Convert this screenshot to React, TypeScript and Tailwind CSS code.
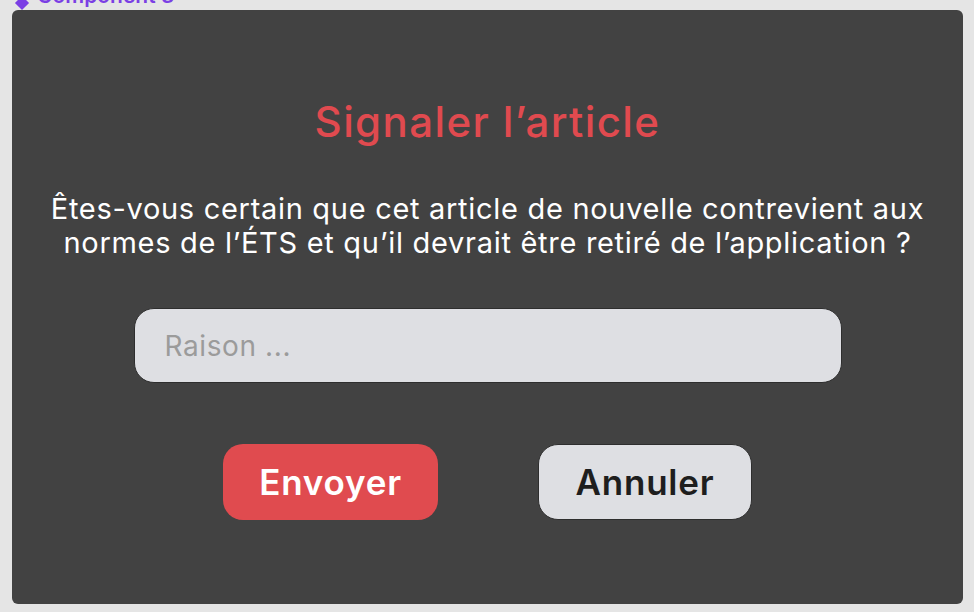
import React from "react";

export default function App() {
  return (
    <div className="w-[974px] h-[612px] bg-[#e5e5e5] overflow-hidden relative" style={{ fontFamily: "Inter, 'Noto Sans', sans-serif" }}>
      <div className="absolute left-[17px] top-[-16px] flex items-center gap-[10px] text-[#7b3fe4] text-[21px] font-semibold leading-[24px]">
        <span className="w-[10px] h-[10px] bg-[#7b3fe4] rotate-45 inline-block mt-[13px]" />
        <span>Component 3</span>
      </div>
      <div className="pt-[10px] pl-[12px]">
        <div className="w-[951px] h-[594px] bg-[#424242] rounded-[6px] flex flex-col items-center">
          <h1 className="mt-[87px] text-[42px] leading-[50px] font-medium text-[#e04a4f] tracking-[1.4px]">Signaler l’article</h1>
          <p className="mt-[45px] text-white text-[29px] leading-[34px] text-center tracking-[0.7px] whitespace-nowrap">
            Êtes-vous certain que cet article de nouvelle contrevient aux<br />
            normes de l’ÉTS et qu’il devrait être retiré de l’application ?
          </p>
          <input
            className="mt-[48px] w-[708px] h-[75px] rounded-[20px] bg-[#dedfe3] border border-[#2e2e2e] px-[30px] text-[28px] tracking-[0.6px] text-[#333] placeholder:text-[#9b9b9b] outline-none"
            placeholder="Raison ..."
          />
          <div className="mt-[61px] flex gap-[100px]">
            <button className="w-[215px] h-[76px] rounded-[20px] bg-[#e04b4f] text-white text-[35px] tracking-[0.8px] font-semibold">Envoyer</button>
            <button className="w-[214px] h-[76px] rounded-[20px] bg-[#dedfe3] border border-[#2e2e2e] text-[#1e1e1e] text-[35px] tracking-[0.8px] font-semibold">Annuler</button>
          </div>
        </div>
      </div>
    </div>
  );
}
